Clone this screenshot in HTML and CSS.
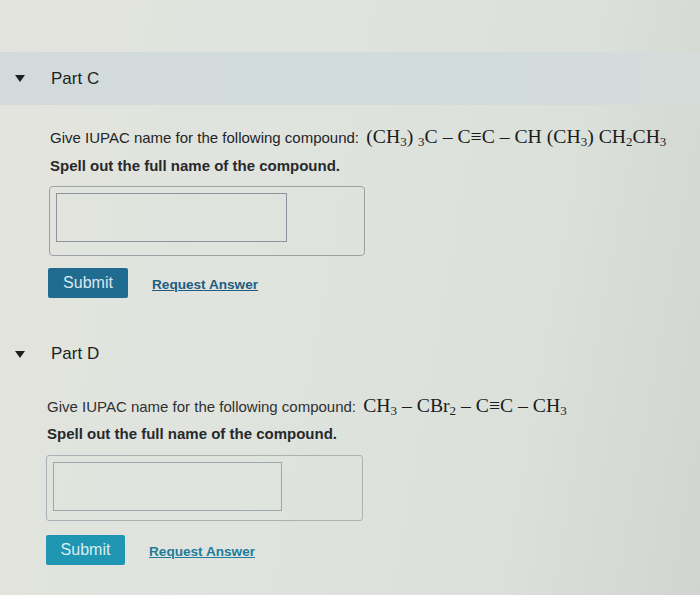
FILE: index.html
```html
<!DOCTYPE html>
<html>
<head>
<meta charset="utf-8">
<link rel="stylesheet" href="styles.css">
</head>
<body>
<div class="page">
  <section class="part part-c">
    <div class="part-header">
      <span class="caret"></span>
      <h2 class="part-title">Part C</h2>
    </div>
    <div class="part-body">
      <p class="prompt">Give IUPAC name for the following compound: <span class="formula">(CH<sub>3</sub>)&nbsp;<sub>3</sub>C&nbsp;&ndash;&nbsp;C&equiv;C&nbsp;&ndash;&nbsp;CH&nbsp;(CH<sub>3</sub>)&nbsp;CH<sub>2</sub>CH<sub>3</sub></span></p>
      <p class="instr">Spell out the full name of the compound.</p>
      <div class="answer-box"><div class="answer-input"></div></div>
      <div class="actions">
        <button class="submit">Submit</button>
        <a class="request" href="#">Request Answer</a>
      </div>
    </div>
  </section>
  <section class="part part-d">
    <div class="part-header">
      <span class="caret"></span>
      <h2 class="part-title">Part D</h2>
    </div>
    <div class="part-body">
      <p class="prompt">Give IUPAC name for the following compound: <span class="formula">CH<sub>3</sub>&nbsp;&ndash;&nbsp;CBr<sub>2</sub>&nbsp;&ndash;&nbsp;C&equiv;C&nbsp;&ndash;&nbsp;CH<sub>3</sub></span></p>
      <p class="instr">Spell out the full name of the compound.</p>
      <div class="answer-box"><div class="answer-input"></div></div>
      <div class="actions">
        <button class="submit">Submit</button>
        <a class="request" href="#">Request Answer</a>
      </div>
    </div>
  </section>
</div>
</body>
</html>
```
FILE: styles.css
```css
html, body {
  margin: 0;
  padding: 0;
}
body {
  width: 700px;
  height: 595px;
  overflow: hidden;
  background: linear-gradient(100deg, #e3e4dd 0%, #dfe3de 45%, #dbe0db 75%, #d2d4cf 100%);
  font-family: "Liberation Sans", Arial, sans-serif;
  color: #232527;
}
.page {
  padding-top: 52px;
}
.part-header {
  height: 53px;
  display: flex;
  align-items: center;
  padding-left: 15px;
}
.part-c .part-header {
  background: linear-gradient(90deg, #d3dadc 0%, #d2dbdc 60%, #d5dcda 100%);
}
.caret {
  width: 0;
  height: 0;
  border-left: 5px solid transparent;
  border-right: 5px solid transparent;
  border-top: 7px solid #1e1f21;
  margin-right: 26px;
}
.part-title {
  margin: 0;
  font-size: 17px;
  font-weight: normal;
  color: #1d1f22;
}
.part-body {
  padding-left: 50px;
}
.prompt {
  margin: 21px 0 0;
  font-size: 15px;
  line-height: 20px;
  height: 20px;
  white-space: nowrap;
}
.formula {
  font-family: "Liberation Serif", "Times New Roman", serif;
  font-size: 19.7px;
  margin-left: 3px;
  color: #1b1c1e;
}
.formula sub {
  font-size: 13px;
  line-height: 0;
  vertical-align: -3px;
}
.instr {
  margin: 10px 0 0;
  font-size: 15px;
  font-weight: bold;
  line-height: 20px;
  color: #27292b;
}
.answer-box {
  margin-top: 10px;
  margin-left: -1px;
  width: 301px;
  height: 56px;
  padding: 6px 7px 6px 6px;
  border: 1px solid #9aa2a6;
  border-radius: 4px;
}
.answer-input {
  width: 229px;
  height: 47px;
  border: 1px solid #8d959c;
}
.actions {
  margin-top: 12px;
  margin-left: -2px;
  display: flex;
  align-items: center;
}
.submit {
  width: 80px;
  height: 30px;
  border: none;
  border-radius: 2px;
  background: #1f6c90;
  color: #dde8ee;
  font-family: "Liberation Sans", Arial, sans-serif;
  font-size: 16px;
  padding: 0;
  margin-right: 24px;
}
.request {
  font-size: 13.6px;
  font-weight: bold;
  color: #1d5d80;
  text-decoration: underline;
  margin-top: 2px;
}
.part-d {
  margin-top: 30px;
}
.part-d .part-header {
  height: 52px;
}
.part-d .part-body {
  padding-left: 47px;
}
.part-d .prompt {
  margin-top: 15px;
  color: #2e3133;
}
.part-d .instr {
  margin-top: 9px;
}
.part-d .answer-box {
  margin-top: 11px;
  height: 52px;
  width: 302px;
  border-color: #a9b2b4;
  border-radius: 3px;
}
.part-d .answer-input {
  width: 227px;
  height: 47px;
  border-color: #9ca7ac;
}
.part-d .actions {
  margin-top: 14px;
  margin-left: -1px;
}
.part-d .submit {
  width: 79px;
  background: #1f97b2;
  color: #d9eef2;
}
.part-d .request {
  color: #1f7d9b;
}
```
